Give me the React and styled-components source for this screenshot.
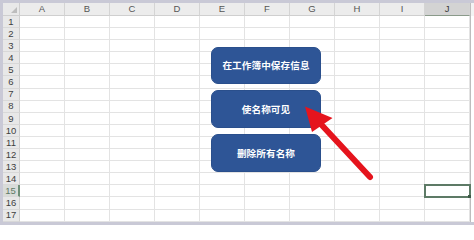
import React from "react";
import styled, { createGlobalStyle } from "styled-components";

const GlobalStyle = createGlobalStyle`
  html, body {
    margin: 0;
    padding: 0;
    background: #ffffff;
    font-family: "Liberation Sans", "Noto Sans", "Noto Sans CJK SC", sans-serif;
  }
`;

const COLS = ["A", "B", "C", "D", "E", "F", "G", "H", "I", "J"];
const ROWS = Array.from({ length: 17 }, (_, i) => i + 1);
const SEL_COL = "J";
const SEL_ROW = 15;

const Frame = styled.div`
  position: relative;
  width: 474px;
  height: 225px;
  overflow: hidden;
  background: #c9c9d6;
  padding: 3px 0 0 3px;
  box-sizing: border-box;
`;

const Grid = styled.div`
  display: grid;
  grid-template-columns: 17px repeat(10, 45px) 1fr;
  grid-template-rows: 13px repeat(17, 12.1px);
  background: #ffffff;
  width: 471px;
`;

const Corner = styled.div`
  position: relative;
  background: #e9e9e9;
  border-right: 1px solid #cfcfcf;
  border-bottom: 1px solid #cfcfcf;
  box-sizing: border-box;

  &::after {
    content: "";
    position: absolute;
    right: 2px;
    bottom: 2px;
    border-style: solid;
    border-width: 0 0 6px 6px;
    border-color: transparent transparent #bdbdbd transparent;
  }
`;

const ColHead = styled.div`
  display: flex;
  align-items: center;
  justify-content: center;
  font-size: 9.5px;
  line-height: 1;
  color: ${(p) => (p.$active ? "#3a3a3a" : "#555")};
  background: ${(p) => (p.$active ? "#d3d3d3" : "#ececec")};
  border-right: 1px solid #d4d4d4;
  border-bottom: ${(p) => (p.$active ? "1px solid #8a9a8a" : "1px solid #cfcfcf")};
  box-sizing: border-box;
`;

const RowHead = styled.div`
  display: flex;
  align-items: center;
  justify-content: center;
  font-size: 9.5px;
  line-height: 1;
  color: ${(p) => (p.$active ? "#5f7a66" : "#3f3f3f")};
  background: ${(p) => (p.$active ? "#d9dcd9" : "#e8e8e8")};
  border-right: ${(p) => (p.$active ? "2px solid #6f8f78" : "1px solid #cfcfcf")};
  border-bottom: 1px solid #d8d8d8;
  box-sizing: border-box;
`;

const Cell = styled.div`
  position: relative;
  border-right: 1px solid #e3e3e3;
  border-bottom: 1px solid #e3e3e3;
  box-sizing: border-box;
  ${(p) =>
    p.$selected &&
    `
    outline: 2px solid #5d7a66;
    outline-offset: -1px;
    z-index: 1;
    &::after {
      content: "";
      position: absolute;
      right: -2px;
      bottom: -2px;
      width: 3px;
      height: 3px;
      background: #3c5a46;
    }
  `}
`;

const Filler = styled.div`
  background: #ffffff;
  border-left: 1px solid #bdbdbd;
`;

const FillerHead = styled(Filler)`
  background: #f3f3f3;
`;

const Shapes = styled.div`
  position: absolute;
  left: 211px;
  top: 46.5px;
  display: flex;
  flex-direction: column;
  gap: 6.3px;
`;

const ShapeButton = styled.div`
  width: 110px;
  height: 37.6px;
  border-radius: 7px;
  background: #2e5596;
  border: 1px solid #2a4f8c;
  box-sizing: border-box;
  display: flex;
  align-items: center;
  justify-content: center;
  color: #ffffff;
  font-family: "Noto Sans CJK SC", "Noto Sans", sans-serif;
  font-weight: 700;
  font-size: 9.6px;
  letter-spacing: 0.1px;
`;

const ArrowLayer = styled.svg`
  position: absolute;
  left: 0;
  top: 0;
  width: 474px;
  height: 225px;
  pointer-events: none;
`;

const buttons = ["在工作簿中保存信息", "使名称可见", "删除所有名称"];

export default function App() {
  return (
    <>
      <GlobalStyle />
      <Frame>
        <Grid>
          <Corner />
          {COLS.map((c) => (
            <ColHead key={c} $active={c === SEL_COL}>
              {c}
            </ColHead>
          ))}
          <FillerHead />
          {ROWS.map((r) => (
            <React.Fragment key={r}>
              <RowHead $active={r === SEL_ROW}>{r}</RowHead>
              {COLS.map((c) => (
                <Cell key={c} $selected={r === SEL_ROW && c === SEL_COL} />
              ))}
              <Filler />
            </React.Fragment>
          ))}
        </Grid>
        <Shapes>
          {buttons.map((b) => (
            <ShapeButton key={b}>{b}</ShapeButton>
          ))}
        </Shapes>
        <ArrowLayer viewBox="0 0 474 225">
          <line
            x1="370"
            y1="177"
            x2="318"
            y2="121"
            stroke="#e5141d"
            strokeWidth="6"
            strokeLinecap="round"
          />
          <polygon points="305,106.5 332.5,118 312,132" fill="#e5141d" />
        </ArrowLayer>
      </Frame>
    </>
  );
}
